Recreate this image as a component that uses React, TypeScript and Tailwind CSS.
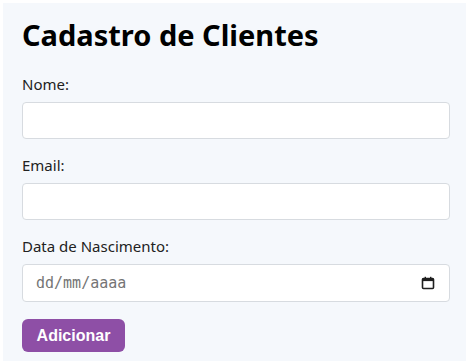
import React from 'react';

function CalendarIcon() {
  return (
    <svg width="14" height="14" viewBox="0 0 14 14" fill="none">
      <rect x="1.5" y="2.5" width="11" height="10" rx="1" stroke="#1f1f1f" strokeWidth="1.6" />
      <rect x="1.5" y="2.5" width="11" height="2.6" fill="#1f1f1f" />
      <rect x="3.6" y="0.8" width="1.4" height="2.5" fill="#1f1f1f" />
      <rect x="9" y="0.8" width="1.4" height="2.5" fill="#1f1f1f" />
    </svg>
  );
}

export default function App() {
  return (
    <div className="w-[474px] h-[364px] bg-white pt-[3px] pl-[3px]" style={{ fontFamily: '"Segoe UI", "Noto Sans", sans-serif' }}>
      <div className="w-[463px] h-[358px] bg-[#f5f8fc] px-[19px] pt-[12px]">
        <h1 className="text-[29px] font-bold text-black leading-[40px]">Cadastro de Clientes</h1>

        <form className="mt-[19px]" onSubmit={e => e.preventDefault()}>
          <label className="block text-[15px] text-[#222] leading-[20px]">Nome:</label>
          <input className="mt-[8px] block w-[428px] h-[37px] bg-white border border-[#d7dbe0] rounded-[4px]" />

          <label className="block mt-[16px] text-[15px] text-[#222] leading-[20px]">Email:</label>
          <input className="mt-[8px] block w-[428px] h-[37px] bg-white border border-[#d7dbe0] rounded-[4px]" />

          <label className="block mt-[16px] text-[15px] text-[#222] leading-[20px]">Data de Nascimento:</label>
          <div className="mt-[8px] flex items-center justify-between w-[428px] h-[38px] bg-white border border-[#d7dbe0] rounded-[4px] pl-[13px] pr-[14px]">
            <span className="text-[15px] text-[#757575]" style={{ fontFamily: '"DejaVu Sans Mono", monospace' }}>dd/mm/aaaa</span>
            <CalendarIcon />
          </div>

          <button type="submit" className="mt-[17px] w-[103px] h-[33px] bg-[#8e4fa6] text-white text-[16px] font-bold rounded-[6px]" style={{ fontFamily: '"Liberation Sans", Arial, sans-serif' }}>
            Adicionar
          </button>
        </form>
      </div>
    </div>
  );
}
